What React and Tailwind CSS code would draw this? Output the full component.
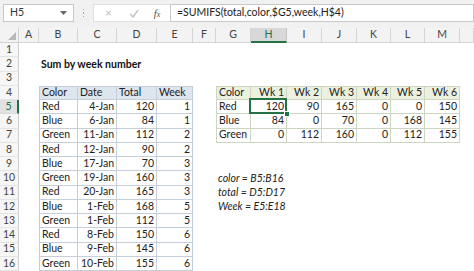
import React from "react";

const COLS = ["", "A", "B", "C", "D", "E", "F", "G", "H", "I", "J", "K", "L", "M", ""];

const left = [
  ["Red", "4-Jan", "120", "1"],
  ["Blue", "6-Jan", "84", "1"],
  ["Green", "11-Jan", "112", "2"],
  ["Red", "12-Jan", "90", "2"],
  ["Blue", "17-Jan", "70", "3"],
  ["Green", "19-Jan", "160", "3"],
  ["Red", "20-Jan", "165", "3"],
  ["Blue", "1-Feb", "168", "5"],
  ["Green", "1-Feb", "112", "5"],
  ["Red", "8-Feb", "150", "6"],
  ["Blue", "9-Feb", "145", "6"],
  ["Green", "10-Feb", "155", "6"],
];

const right = [
  ["Color", "Wk 1", "Wk 2", "Wk 3", "Wk 4", "Wk 5", "Wk 6"],
  ["Red", "120", "90", "165", "0", "0", "150"],
  ["Blue", "84", "0", "70", "0", "168", "145"],
  ["Green", "0", "112", "160", "0", "112", "155"],
];

const notes = { 10: "color = B5:B16", 11: "total = D5:D17", 12: "Week = E5:E18" };

function Cell({ r, c }) {
  if (c === 0) {
    if (r === 5) {
      return (
        <div className="flex items-center justify-center bg-[#e1e1e1] border-r-2 border-r-[#217346] border-b border-b-[#dadada] text-[#217346] text-[10.5px]">
          {r}
        </div>
      );
    }
    return (
      <div className="flex items-center justify-center bg-[#f6f6f6] border-r border-r-[#cfcfcf] border-b border-b-[#e4e4e4] text-[#444] text-[10.5px]">
        {r}
      </div>
    );
  }
  if (c >= 2 && c <= 5 && r >= 4 && r <= 16) {
    const head = r === 4;
    const text = head ? ["Color", "Date", "Total", "Week"][c - 2] : left[r - 5][c - 2];
    const alignRight = !head && c >= 3;
    return (
      <div
        className={
          "flex items-center whitespace-nowrap border-r border-b border-[#c5ced9] px-[2px] text-[10.5px] text-[#222] " +
          (head ? "bg-[#dde5ef] border-t " : "bg-white ") +
          (c === 2 ? "border-l " : "") +
          (alignRight ? "justify-end" : "justify-start")
        }
      >
        {text}
      </div>
    );
  }
  if (c >= 7 && c <= 13 && r >= 4 && r <= 7) {
    const head = r === 4;
    const text = right[r - 4][c - 7];
    const alignRight = c >= 8;
    const selected = r === 5 && c === 8;
    return (
      <div
        className={
          "relative flex items-center whitespace-nowrap border-r border-b border-[#cdd6c0] px-[2px] text-[10.5px] text-[#222] " +
          (head ? "bg-[#ebf1de] border-t " : "bg-white ") +
          (c === 7 ? "border-l " : "") +
          (alignRight ? "justify-end" : "justify-start")
        }
      >
        {text}
        {selected && (
          <>
            <div className="absolute left-[-2px] top-[-2px] right-[-1px] bottom-[-1px] border-2 border-[#217346] z-10" />
            <div className="absolute right-[-4px] bottom-[-4px] w-[6px] h-[6px] bg-[#217346] border border-white z-10" />
          </>
        )}
      </div>
    );
  }
  if (r === 2 && c === 2) {
    return (
      <div className="relative z-10 flex items-center whitespace-nowrap pl-[2px] font-bold text-[10.5px] text-[#111] overflow-visible">
        Sum by week number
      </div>
    );
  }
  if (c === 7 && notes[r]) {
    return (
      <div className="relative z-10 flex items-center whitespace-nowrap pl-[2px] italic text-[10.5px] text-[#222] overflow-visible">
        {notes[r]}
      </div>
    );
  }
  return <div />;
}

export default function App() {
  const rows = [];
  for (let r = 1; r <= 16; r++) rows.push(r);
  return (
    <div className="w-[474px] h-[271px] overflow-hidden bg-white font-['Lato',_'Open_Sans',_sans-serif]">
      <div className="h-[28px] bg-[#f1f1f1] flex items-start pt-[4px] pl-[3px]">
        <div className="w-[71px] h-[18px] bg-white border border-[#c8c8c8] flex items-center justify-between pl-[6px] pr-[6px] text-[10.5px] text-[#333]">
          <span>H5</span>
          <svg width="7" height="4" viewBox="0 0 7 4">
            <path d="M0 0 L7 0 L3.5 4 Z" fill="#666" />
          </svg>
        </div>
        <div className="w-[19px] h-[18px] flex flex-col items-center justify-center gap-[2px]">
          <div className="w-[1.5px] h-[1.5px] bg-[#aaa]" />
          <div className="w-[1.5px] h-[1.5px] bg-[#aaa]" />
          <div className="w-[1.5px] h-[1.5px] bg-[#aaa]" />
        </div>
        <div className="w-[77px] h-[18px] bg-white border border-[#e0e0e0] border-r-0 flex items-center">
          <span className="w-[25px] text-center text-[12px] text-[#c0c0c0] ml-[2px]">×</span>
          <span className="w-[25px] flex justify-center">
            <svg width="10" height="9" viewBox="0 0 10 9">
              <path d="M1 5 L4 8 L9 1" stroke="#c0c0c0" strokeWidth="1.3" fill="none" />
            </svg>
          </span>
          <span className="w-[22px] text-center italic font-['Liberation_Serif',_serif] text-[11px] text-[#555]">
            f<span className="text-[8px]">x</span>
          </span>
        </div>
        <div className="flex-1 h-[18px] bg-white border border-[#c8c8c8] flex items-center pl-[6px] text-[10.5px] text-[#222] whitespace-nowrap">
          =SUMIFS(total,color,$G5,week,H$4)
        </div>
      </div>
      <div className="grid grid-cols-[19px_20px_39px_39px_40px_36px_23px_35px_36px_35px_35px_34px_34px_35px_1fr] grid-rows-[15px_repeat(16,14.25px)]">
        {COLS.map((l, i) => {
          if (i === 0) {
            return (
              <div key={"h" + i} className="relative bg-[#f3f3f3] border-r border-b border-[#d0d0d0]">
                <svg className="absolute right-[2px] bottom-[2px]" width="8" height="8" viewBox="0 0 8 8">
                  <path d="M8 0 L8 8 L0 8 Z" fill="#b8b8b8" />
                </svg>
              </div>
            );
          }
          if (l === "H") {
            return (
              <div key={"h" + i} className="flex items-center justify-center bg-[#d8d8d8] border-r border-r-[#c4c4c4] border-b-2 border-b-[#217346] text-[10.5px] text-[#217346]">
                {l}
              </div>
            );
          }
          return (
            <div key={"h" + i} className="flex items-center justify-center bg-[#f3f3f3] border-r border-b border-[#d4d4d4] text-[10.5px] text-[#444]">
              {l}
            </div>
          );
        })}
        {rows.map((r) =>
          COLS.map((_, c) => <Cell key={r + "-" + c} r={r} c={c} />)
        )}
      </div>
    </div>
  );
}
